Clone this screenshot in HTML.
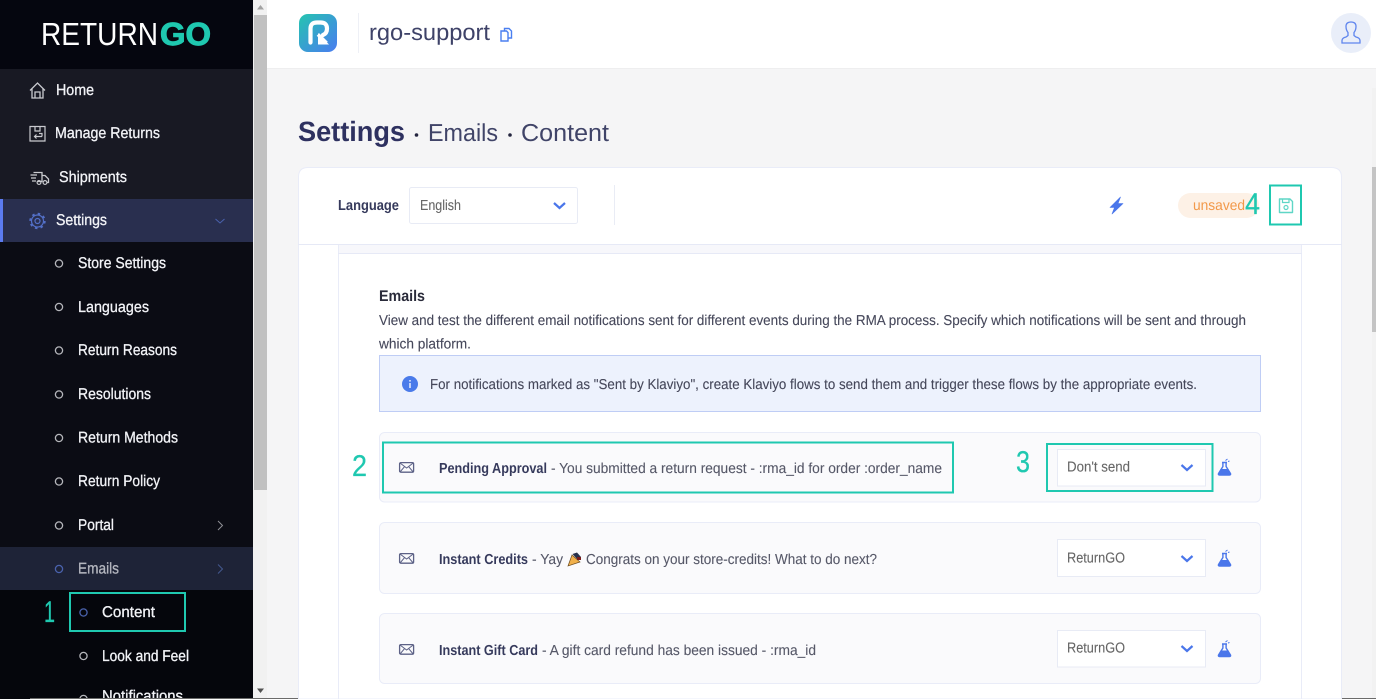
<!DOCTYPE html>
<html lang="en">
<head>
<meta charset="utf-8">
<title>ReturnGO Settings</title>
<style>
html,body{margin:0;padding:0;width:1376px;height:699px;overflow:hidden;background:#f5f5f6}
svg{display:block;position:absolute;left:0;top:0}
text{font-family:"Liberation Sans",sans-serif;white-space:pre}
.n{font-size:15.500px;fill:#f2f3f7;stroke:#f2f3f7;stroke-width:.3}
.t{font-size:14.500px;fill:#565868;stroke:#565868;stroke-width:.1}
.h{font-size:14.500px;font-weight:700;fill:#363a5c}
.a{font-size:30px;fill:#1fc8b0;stroke:#1fc8b0;stroke-width:.25}
</style>
</head>
<body>
<svg width="1376" height="699" viewBox="0 0 1376 699" xmlns="http://www.w3.org/2000/svg" text-rendering="geometricPrecision">
<defs>
<linearGradient id="lg" x1="0" y1="0" x2="1" y2="1"><stop offset="0" stop-color="#25c4b0"/><stop offset="1" stop-color="#4a7cf0"/></linearGradient>
<g id="chev"><path d="M-5.500 -2.500L0 2.500L5.500 -2.500" fill="none" stroke="#4a76ea" stroke-width="2.200"/></g>
<g id="flask"><path d="M-2.500 -5H2.500M-1.600 -5V-1L-6 6Q-6.500 7.500 -5 7.500H5Q6.500 7.500 6 6L1.600 -1V-5" fill="none" stroke="#4a76ea" stroke-width="1.400"/><path d="M-4 1.500H4L6 6Q6.500 7.500 5 7.500H-5Q-6.500 7.500 -6 6Z" fill="#4a76ea"/><path d="M1 -7L3 -8.500M3.500 -6L5 -6.500" stroke="#4a76ea" stroke-width="1" fill="none"/></g>
<g id="env"><rect x="0.600" y="0.600" width="14" height="9.600" rx="1.200" fill="none" stroke="#5c6186" stroke-width="1.300"/><path d="M1 1L7.600 6L14.200 1M1 10L5.600 4.600M14.200 10L9.600 4.600" fill="none" stroke="#5c6186" stroke-width="1"/></g>
</defs>

<!-- Main background -->
<rect x="267" y="0" width="1109" height="699" fill="#f5f5f6"/>
<rect x="267" y="0" width="1109" height="69" fill="#fff"/>
<rect x="267" y="68" width="1109" height="1" fill="#eeeeef"/>

<!-- Right scrollbar -->
<rect x="1372" y="88" width="4" height="611" fill="#f2f2f2"/>
<rect x="1372" y="167" width="4" height="165" fill="#c4c4c4"/>

<!-- Sidebar -->
<rect x="0" y="0" width="253" height="699" fill="#0b0c14"/>
<rect x="0" y="0" width="253" height="69" fill="#05060f"/>
<rect x="0" y="69" width="253" height="130" fill="#181923"/>
<rect x="0" y="199" width="253" height="43" fill="#292f4f"/>
<rect x="0" y="199" width="3" height="43" fill="#5b7bf0"/>
<rect x="0" y="547" width="253" height="43" fill="#1e2337"/>
<rect x="0" y="590" width="253" height="109" fill="#05060c"/>

<!-- Left scrollbar -->
<rect x="253" y="0" width="14" height="699" fill="#f1f1f1"/>
<rect x="254" y="15" width="13" height="475" fill="#c1c1c1"/>
<path d="M257 9.500L260.500 5L264 9.500Z" fill="#a3a3a3"/>
<path d="M257 688.500L260.500 693L264 688.500Z" fill="#505050"/>

<!-- Logo -->
<text x="41" y="45" font-size="32" fill="#fff" textLength="117" lengthAdjust="spacingAndGlyphs">RETURN</text>
<text x="160" y="45" font-size="32" font-weight="700" fill="#1fc8b0" textLength="51" lengthAdjust="spacingAndGlyphs" stroke="#1fc8b0" stroke-width="1">GO</text>

<!-- Nav icons -->
<path d="M30 90.500L37.500 83L45 90.500M32 88.500V98H43V88.500M35 98V92H40V98" fill="none" stroke="#c9cacf" stroke-width="1.300"/>
<path d="M30 126.500H45V141H30ZM35 126.500V131H40V126.500M42 136.500H34.500M36.500 134.500L34.500 136.500L36.500 138.500M42 136.500V133.500H39" fill="none" stroke="#c9cacf" stroke-width="1.200"/>
<path d="M33.500 172.500H42V181.500H37.500M42 175.500H45L48.500 179V182.500H47M30.500 175H37M31 178H36M32 181H36" fill="none" stroke="#c9cacf" stroke-width="1.300"/>
<circle cx="39" cy="182.500" r="1.900" fill="none" stroke="#c9cacf" stroke-width="1.200"/><circle cx="45" cy="182.500" r="1.900" fill="none" stroke="#c9cacf" stroke-width="1.200"/>
<circle cx="37.500" cy="221" r="2.500" fill="none" stroke="#5370c8" stroke-width="1.200"/>
<circle cx="37.500" cy="221" r="6" fill="none" stroke="#5370c8" stroke-width="1.200"/>
<circle cx="37.500" cy="221" r="7.200" fill="none" stroke="#5370c8" stroke-width="2" stroke-dasharray="2.500 3.150"/>
<path d="M215.500 219L220 223L224.500 219" fill="none" stroke="#4a62ad" stroke-width="1"/>

<!-- Nav text -->
<text class="n" x="56" y="95" textLength="38" lengthAdjust="spacingAndGlyphs">Home</text>
<text class="n" x="55" y="138" textLength="105" lengthAdjust="spacingAndGlyphs">Manage Returns</text>
<text class="n" x="59" y="182" textLength="68" lengthAdjust="spacingAndGlyphs">Shipments</text>
<text class="n" x="56" y="225" textLength="51" lengthAdjust="spacingAndGlyphs">Settings</text>
<text class="n" x="78" y="268" textLength="88" lengthAdjust="spacingAndGlyphs">Store Settings</text>
<text class="n" x="78" y="312" textLength="71" lengthAdjust="spacingAndGlyphs">Languages</text>
<text class="n" x="78" y="355" textLength="99" lengthAdjust="spacingAndGlyphs">Return Reasons</text>
<text class="n" x="78" y="399" textLength="73" lengthAdjust="spacingAndGlyphs">Resolutions</text>
<text class="n" x="78" y="442.500" textLength="100" lengthAdjust="spacingAndGlyphs">Return Methods</text>
<text class="n" x="78" y="486" textLength="82" lengthAdjust="spacingAndGlyphs">Return Policy</text>
<text class="n" x="78" y="530" textLength="36" lengthAdjust="spacingAndGlyphs">Portal</text>
<text class="n" x="78" y="573.500" textLength="41" lengthAdjust="spacingAndGlyphs" style="fill:#b4b6bf;stroke:#b4b6bf">Emails</text>
<text class="n" x="102" y="617" textLength="53" lengthAdjust="spacingAndGlyphs">Content</text>
<text class="n" x="102" y="661" textLength="87" lengthAdjust="spacingAndGlyphs">Look and Feel</text>
<text class="n" x="102" y="701" textLength="81" lengthAdjust="spacingAndGlyphs">Notifications</text>

<!-- Nav bullets -->
<g fill="none" stroke="#b5b6bb" stroke-width="1.300">
<circle cx="59" cy="263.500" r="3.600"/><circle cx="59" cy="307" r="3.600"/><circle cx="59" cy="350.500" r="3.600"/><circle cx="59" cy="394.500" r="3.600"/><circle cx="59" cy="438" r="3.600"/><circle cx="59" cy="481.500" r="3.600"/><circle cx="59" cy="525.500" r="3.600"/><circle cx="83.500" cy="656" r="3.600"/><circle cx="83.500" cy="699" r="3.600"/>
</g>
<circle cx="59" cy="569" r="3.600" fill="none" stroke="#4a62ad" stroke-width="1.300"/>
<circle cx="83.500" cy="612.500" r="3.600" fill="none" stroke="#4a62ad" stroke-width="1.300"/>
<path d="M218 521L222.500 525.500L218 530" fill="none" stroke="#8f9096" stroke-width="1"/>
<path d="M218 564.500L222.500 569L218 573.500" fill="none" stroke="#44598f" stroke-width="1"/>
<rect x="70" y="593" width="115" height="38" fill="none" stroke="#1fc8b0" stroke-width="2"/>
<text class="a" x="44" y="622" textLength="11" lengthAdjust="spacingAndGlyphs">1</text>

<!-- Bottom edge -->
<rect x="30" y="698" width="1346" height="1" fill="#6b6b6b"/>

<!-- Header -->
<rect x="299" y="14" width="38" height="38" rx="9" fill="url(#lg)"/>
<path d="M310.500 42.500V28.500Q310.500 22.500 317 22.500H320.500Q327 22.500 327 28.500Q327 33.500 323 35" fill="none" stroke="#fff" stroke-width="4.200" stroke-linecap="round"/>
<path d="M318 34.500L326.500 43" fill="none" stroke="#fff" stroke-width="3.600"/>
<path d="M318 33V44.500H329L318 33Z" fill="#fff"/>
<rect x="358" y="13" width="1" height="40" fill="#eef0f6"/>
<text x="369" y="40" font-size="23" fill="#3e4268" textLength="121" lengthAdjust="spacingAndGlyphs">rgo-support</text>
<path d="M501 31H506.500L508 32.500V41H501Z" fill="#fff" stroke="#4a7ff0" stroke-width="1.400"/>
<path d="M504.500 31V28.500H509L511.500 31V38H508" fill="none" stroke="#4a7ff0" stroke-width="1.400"/>
<circle cx="1351" cy="33" r="20" fill="#e9eef9"/>
<path d="M1342 43H1360V40.500Q1360 38 1356 37L1354 35.500V32.500Q1356 30 1356 26.500Q1356 22 1351 22Q1346 22 1346 26.500Q1346 30 1348 32.500V35.500L1346 37Q1342 38 1342 40.500Z" fill="none" stroke="#5f85ee" stroke-width="1.300"/>

<!-- Title -->
<text x="298" y="141" font-size="28" font-weight="700" fill="#2e3160" textLength="107" lengthAdjust="spacingAndGlyphs">Settings</text>
<circle cx="416.500" cy="135" r="1.800" fill="#23253f"/>
<text x="428" y="141" font-size="24.500" fill="#404468" textLength="70" lengthAdjust="spacingAndGlyphs">Emails</text>
<circle cx="510" cy="135" r="1.800" fill="#23253f"/>
<text x="521" y="141" font-size="24.500" fill="#404468" textLength="88" lengthAdjust="spacingAndGlyphs">Content</text>

<!-- Main card -->
<path d="M298.500 699V177Q298.500 167.500 308 167.500H1331Q1341.500 167.500 1341.500 177V699Z" fill="#fff" stroke="#e9ecf8"/>
<rect x="298" y="244" width="1044" height="1" fill="#e6e9f6"/>
<rect x="339" y="245" width="962" height="8" fill="#f7f7fb"/>
<rect x="338" y="245" width="1" height="454" fill="#e9ecf8"/>
<rect x="1301" y="245" width="1" height="454" fill="#e9ecf8"/>
<rect x="338" y="253" width="964" height="1" fill="#e6e9f6"/>

<!-- Toolbar -->
<text x="338" y="210" font-size="14.500" font-weight="700" fill="#363a5c" textLength="61" lengthAdjust="spacingAndGlyphs">Language</text>
<rect x="409.500" y="187.500" width="168" height="36" rx="2" fill="#fff" stroke="#e8ebf5"/>
<text class="t" x="420" y="210" textLength="41" lengthAdjust="spacingAndGlyphs" style="fill:#666;stroke:#666">English</text>
<use href="#chev" x="559.500" y="205.500"/>
<rect x="614" y="185" width="1" height="40" fill="#e9ecf5"/>
<path d="M1120.500 197L1110 207.500H1114.500L1112 214L1123 203.500H1118Z" fill="#4a76ea" stroke="#4a76ea" stroke-width=".6" stroke-linejoin="round"/>
<rect x="1178" y="193" width="81" height="25" rx="12.500" fill="#fdf1e6"/>
<text x="1193" y="210" font-size="14.500" fill="#f2994a" textLength="52" lengthAdjust="spacingAndGlyphs">unsaved</text>
<text class="a" x="1245" y="214" textLength="15" lengthAdjust="spacingAndGlyphs">4</text>
<rect x="1270" y="185.500" width="31" height="39" fill="none" stroke="#1fc8b0" stroke-width="2"/>
<path d="M1279.500 199H1290L1292.500 201.500V212.500H1279.500Z" fill="none" stroke="#5fd6c6" stroke-width="1.400" stroke-linejoin="round"/>
<path d="M1282.500 199V202.500H1289V199" fill="none" stroke="#5fd6c6" stroke-width="1.200"/>
<circle cx="1286" cy="207.500" r="2" fill="none" stroke="#5fd6c6" stroke-width="1.200"/>

<!-- Intro -->
<text x="379" y="301" font-size="15.500" font-weight="700" fill="#2a2b3a" textLength="46" lengthAdjust="spacingAndGlyphs">Emails</text>
<text x="379" y="325" font-size="14.300" fill="#45475a" stroke="#45475a" stroke-width=".1" textLength="867" lengthAdjust="spacingAndGlyphs">View and test the different email notifications sent for different events during the RMA process. Specify which notifications will be sent and through</text>
<text x="379" y="348.500" font-size="14.300" fill="#45475a" stroke="#45475a" stroke-width=".1" textLength="92" lengthAdjust="spacingAndGlyphs">which platform.</text>

<!-- Alert -->
<rect x="379.500" y="355.500" width="881" height="56" fill="#edf2fd" stroke="#bfcdf5"/>
<circle cx="410" cy="384" r="8" fill="#4a7bea"/>
<rect x="409.200" y="383" width="1.600" height="5" fill="#dfe8fb"/>
<rect x="409.200" y="380" width="1.600" height="1.600" fill="#dfe8fb"/>
<text x="430" y="389" font-size="14.300" fill="#45475a" stroke="#45475a" stroke-width=".1" textLength="767" lengthAdjust="spacingAndGlyphs">For notifications marked as "Sent by Klaviyo", create Klaviyo flows to send them and trigger these flows by the appropriate events.</text>

<!-- Rows -->
<rect x="379.500" y="432.500" width="881" height="69.500" rx="5" fill="#fafafc" stroke="#e9ecf8"/>
<rect x="379.500" y="522.500" width="881" height="71" rx="5" fill="#fafafc" stroke="#e9ecf8"/>
<rect x="379.500" y="613.500" width="881" height="70" rx="5" fill="#fafafc" stroke="#e9ecf8"/>
<use href="#env" x="399" y="462"/>
<use href="#env" x="399" y="553"/>
<use href="#env" x="399" y="644"/>

<text class="h" x="439" y="473" textLength="108" lengthAdjust="spacingAndGlyphs">Pending Approval</text>
<text class="t" x="551" y="473" textLength="391" lengthAdjust="spacingAndGlyphs">- You submitted a return request - :rma_id for order :order_name</text>
<text class="h" x="439" y="564" textLength="89" lengthAdjust="spacingAndGlyphs">Instant Credits</text>
<text class="t" x="532" y="564" textLength="31" lengthAdjust="spacingAndGlyphs">- Yay</text>
<path d="M568 566L572 555L580 562Z" fill="#f0b04a" stroke="#6b4a1e" stroke-width=".7"/>
<path d="M572.500 554L577 552.500L581 557L578 560Z" fill="#27304a"/>
<rect x="577" y="557" width="4" height="3" fill="#7a1d1d"/>
<text class="t" x="586" y="564" textLength="291" lengthAdjust="spacingAndGlyphs">Congrats on your store-credits! What to do next?</text>
<text class="h" x="439" y="655" textLength="99" lengthAdjust="spacingAndGlyphs">Instant Gift Card</text>
<text class="t" x="542" y="655" textLength="274" lengthAdjust="spacingAndGlyphs">- A gift card refund has been issued - :rma_id</text>

<!-- Selects -->
<rect x="1057.500" y="449.500" width="148" height="36.500" fill="#fff" stroke="#e8ebf5"/>
<rect x="1057.500" y="539.500" width="148" height="37" fill="#fff" stroke="#e8ebf5"/>
<rect x="1057.500" y="630.500" width="148" height="36.500" fill="#fff" stroke="#e8ebf5"/>
<text class="t" x="1067" y="471.500" textLength="63" lengthAdjust="spacingAndGlyphs" style="fill:#666;stroke:#666">Don't send</text>
<text class="t" x="1067" y="562.500" textLength="58" lengthAdjust="spacingAndGlyphs" style="fill:#666;stroke:#666">ReturnGO</text>
<text class="t" x="1067" y="652.500" textLength="58" lengthAdjust="spacingAndGlyphs" style="fill:#666;stroke:#666">ReturnGO</text>
<use href="#chev" x="1187" y="467.500"/>
<use href="#chev" x="1187" y="558.500"/>
<use href="#chev" x="1187" y="648.500"/>
<use href="#flask" x="1224.500" y="467.500"/>
<use href="#flask" x="1224.500" y="558.500"/>
<use href="#flask" x="1224.500" y="649"/>

<!-- Annotations -->
<rect x="383" y="442.500" width="570" height="50" fill="none" stroke="#1fc8b0" stroke-width="2"/>
<rect x="1047" y="444" width="165.500" height="47" fill="none" stroke="#1fc8b0" stroke-width="2"/>
<text class="a" x="352" y="476" textLength="15" lengthAdjust="spacingAndGlyphs">2</text>
<text class="a" x="1016" y="472" textLength="14" lengthAdjust="spacingAndGlyphs">3</text>
</svg>
</body>
</html>
